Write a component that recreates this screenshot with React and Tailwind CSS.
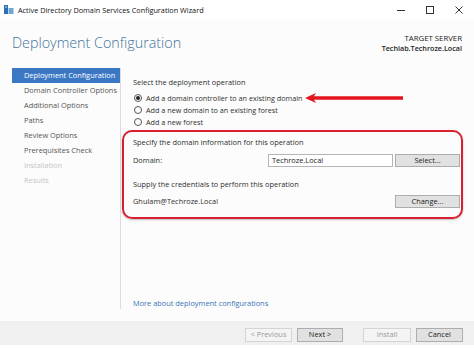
import React from 'react'

const nav = [
  { label: 'Deployment Configuration', active: true },
  { label: 'Domain Controller Options' },
  { label: 'Additional Options' },
  { label: 'Paths' },
  { label: 'Review Options' },
  { label: 'Prerequisites Check' },
  { label: 'Installation', disabled: true },
  { label: 'Results', disabled: true },
]

function Radio({ checked, children }) {
  return (
    <div className="flex items-center h-[12px] pl-[1px]">
      <span className="w-[8px] h-[8px] rounded-full border border-[#555] bg-white flex items-center justify-center">
        {checked && <span className="w-[4px] h-[4px] rounded-full bg-[#222]" />}
      </span>
      <span className="ml-[4px] text-[7.25px]">{children}</span>
    </div>
  )
}

function Btn({ children, disabled, className = '' }) {
  return (
    <div
      className={`h-[14px] flex items-center justify-center border text-[7.4px] ${
        disabled
          ? 'border-[#d4d4d4] bg-[#f4f4f4] text-[#9a9a9a]'
          : 'border-[#adadad] bg-[#e1e1e1] text-[#222]'
      } ${className}`}
    >
      {children}
    </div>
  )
}

export default function App() {
  return (
    <div className="relative w-[474px] h-[348px] bg-[#fcfcfc] flex flex-col overflow-hidden text-[#2e2e2e] font-['Open_Sans','Liberation_Sans',sans-serif] text-[7.4px]">
      {/* title bar */}
      <div className="h-[20px] bg-white flex items-center pl-[4px]">
        <svg width="10" height="10" viewBox="0 0 10 10">
          <rect x="0" y="0" width="4" height="9" fill="#2d6fb5" />
          <rect x="4.5" y="3" width="5" height="6" fill="#6fa7dc" />
          <rect x="1" y="1.5" width="2" height="1" fill="#cfe3f5" />
        </svg>
        <span className="ml-[4px] text-[7.3px] text-[#111]">Active Directory Domain Services Configuration Wizard</span>
        <div className="ml-auto flex items-center h-full">
          <svg width="29" height="20" viewBox="0 0 29 20">
            <line x1="10" y1="10.5" x2="18" y2="10.5" stroke="#333" strokeWidth="1" />
          </svg>
          <svg width="29" height="20" viewBox="0 0 29 20">
            <rect x="10.5" y="6.5" width="7" height="7" fill="none" stroke="#333" strokeWidth="1" />
          </svg>
          <svg width="29" height="20" viewBox="0 0 29 20">
            <path d="M10.5 6.5 L17.5 13.5 M17.5 6.5 L10.5 13.5" stroke="#333" strokeWidth="1" />
          </svg>
        </div>
      </div>

      {/* header */}
      <div className="h-[48px] flex items-start">
        <h1 className="ml-[12px] mt-[14px] text-[14.3px] leading-[18px] font-light text-[#3f729a]">Deployment Configuration</h1>
        <div className="ml-auto mr-[12px] mt-[13px] text-right text-[7.8px] leading-[10px] text-[#222]">
          <div>TARGET SERVER</div>
          <div className="font-semibold text-[7.2px]">Techlab.Techroze.Local</div>
        </div>
      </div>

      {/* main */}
      <div className="h-[253px] flex">
        <div className="w-[120px] pl-[12px]">
          {nav.map((n) => (
            <div
              key={n.label}
              className={`h-[15px] flex items-center pl-[12px] whitespace-nowrap ${
                n.active ? 'bg-[#3a78c4] text-white' : n.disabled ? 'text-[#c4c4c4]' : 'text-[#555]'
              }`}
            >
              {n.label}
            </div>
          ))}
        </div>

        <div className="w-[353px] h-[241px] border-l border-[#dcdcdc] flex flex-col">
          <div className="pl-[12px] mt-[9px] h-[12px] flex items-center">Select the deployment operation</div>
          <div className="pl-[12px] mt-[3px] flex flex-col">
            <Radio checked>Add a domain controller to an existing domain</Radio>
            <Radio>Add a new domain to an existing forest</Radio>
            <Radio>Add a new forest</Radio>
          </div>

          <div className="ml-[1px] mt-[2px] w-[341px] h-[89px] border-2 border-[#d8202e] rounded-[10px] shadow-[0_1px_2px_rgba(0,0,0,0.25)] pl-[9px] pr-[1px] pt-[5px]">
            <div className="h-[12px] flex items-center">Specify the domain information for this operation</div>
            <div className="mt-[5px] h-[13px] flex items-center">
              <span>Domain:</span>
              <div className="ml-auto flex items-center">
                <div className="w-[125px] h-[13px] border border-[#b5b5b5] bg-white flex items-center pl-[3px] text-[#222]">Techroze.Local</div>
                <Btn className="ml-[2px] w-[65px] !h-[13px]">Select...</Btn>
              </div>
            </div>
            <div className="mt-[12px] h-[12px] flex items-center">Supply the credentials to perform this operation</div>
            <div className="mt-[4px] h-[13px] flex items-center">
              <span>Ghulam@Techroze.Local</span>
              <Btn className="ml-auto w-[65px] !h-[13px]">Change...</Btn>
            </div>
          </div>

          <div className="mt-auto pl-[12px] h-[12px] flex items-center text-[#3a74b5] translate-y-[1px]">
            More about deployment configurations
          </div>
        </div>
      </div>

      {/* footer */}
      <div className="h-[24px] bg-[#f0f0f0] flex items-start pt-[7px] pl-[245px]">
        <Btn disabled className="w-[47px]">&lt; Previous</Btn>
        <Btn className="ml-[5px] w-[46px]">Next &gt;</Btn>
        <Btn disabled className="ml-[20px] w-[48px]">Install</Btn>
        <Btn className="ml-[5px] w-[47px]">Cancel</Btn>
      </div>
      <div className="flex-1 bg-white" />

      {/* annotation arrow */}
      <svg className="absolute left-[303px] top-[92px]" width="102" height="12" viewBox="0 0 102 12">
        <path d="M2 6 L13 1 L11 4.2 L100 4.2 L100 7.8 L11 7.8 L13 11 Z" fill="#e3161f" />
      </svg>
    </div>
  )
}
